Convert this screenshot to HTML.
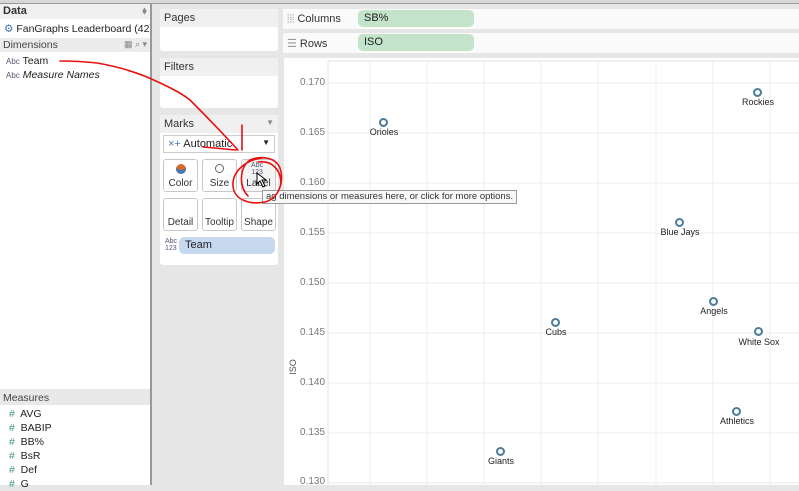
<!DOCTYPE html>
<html><head><style>
*{margin:0;padding:0;box-sizing:border-box}
body{width:799px;height:485px;overflow:hidden;background:#e6e6e6;font-family:"Liberation Sans",sans-serif;font-size:11px;color:#222;position:relative}
.a{position:absolute}
.card{position:absolute;background:#fff;border-radius:3px}
.hd{background:#f0f0f0;padding:3px 4px;color:#333}
.btn{position:absolute;width:35px;height:33px;background:#fff;border:1px solid #c8c8c8;border-radius:3px;font-size:10px;text-align:center;padding-top:18px;color:#333}
.pill{position:absolute;background:#c3e3cb;border-radius:5px;height:17px;padding:2px 6px;font-size:11px}
.pt{position:absolute;width:9px;height:9px;border:2px solid #4a7c9a;border-radius:50%}
.lb{position:absolute;font-size:9px;color:#222;transform:translateX(-50%);white-space:nowrap}
.yt{position:absolute;left:300px;font-size:10px;color:#777}
</style></head><body>
<div class="a" style="left:0;top:0;width:799px;height:4px;background:#d8d8d8;border-bottom:1px solid #999"></div>
<div class="a" style="left:0;top:4px;width:152px;height:481px;background:#fff;border-right:2px solid #999"></div>
<div class="a hd" style="left:0;top:4px;width:150px;height:15px;padding:1px 3px;font-weight:bold">Data<span style="float:right;font-weight:normal;color:#888">⬧</span></div>
<div class="a" style="left:4px;top:23px;width:146px;font-size:10.5px;white-space:nowrap;overflow:hidden"><span style="color:#3a6fb0">⚙</span> FanGraphs Leaderboard (42) (...</div>
<div class="a" style="left:0;top:38px;width:150px;height:14px;background:#ececec;padding:1px 3px;color:#444;font-size:10.5px">Dimensions<span style="float:right;color:#888;font-size:9px">▦ ⌕ ▾</span></div>
<div class="a" style="left:6px;top:55px;font-size:10.5px"><span style="font-size:8px;color:#557">Abc</span> Team</div>
<div class="a" style="left:6px;top:69px;font-style:italic;font-size:10.5px"><span style="font-size:8px;color:#557;font-style:normal">Abc</span> Measure Names</div>
<div class="a" style="left:0;top:389px;width:150px;height:16px;background:#e8e8e8;padding:3px 3px;color:#444;font-size:10.5px">Measures</div>
<div class="a" style="left:9px;top:407px;line-height:14px;font-size:10.5px"><span style="color:#3a9a6a">#</span>&nbsp; AVG<br><span style="color:#3a9a6a">#</span>&nbsp; BABIP<br><span style="color:#3a9a6a">#</span>&nbsp; BB%<br><span style="color:#3a9a6a">#</span>&nbsp; BsR<br><span style="color:#3a9a6a">#</span>&nbsp; Def<br><span style="color:#3a9a6a">#</span>&nbsp; G</div>
<div class="card" style="left:160px;top:9px;width:118px;height:42px"><div class="hd">Pages</div></div>
<div class="card" style="left:160px;top:58px;width:118px;height:50px"><div class="hd">Filters</div></div>
<div class="card" style="left:160px;top:115px;width:118px;height:150px"><div class="hd">Marks<span style="float:right;color:#888;font-size:8px">▼</span></div></div>
<div class="a" style="left:163px;top:135px;width:112px;height:18px;border:1px solid #ccc;background:#fff;padding:2px 4px;font-size:11px"><span style="color:#57a">×+</span> Automatic<span style="float:right;font-size:8px">▼</span></div>
<div class="btn" style="left:163px;top:159px">Color<div class="a" style="left:12px;top:4px;width:10px;height:10px;border-radius:50%;background:#d96a2a;box-shadow:inset 0 -4px #4a7ab0"></div></div>
<div class="btn" style="left:202px;top:159px">Size<div class="a" style="left:12px;top:4px;width:9px;height:9px;border-radius:50%;border:1px solid #666"></div></div>
<div class="btn" style="left:241px;top:159px;background:#f4f4f4">Label<div class="a" style="left:9px;top:2px;font-size:7px;color:#557;line-height:7px">Abc<br>123</div></div>
<div class="btn" style="left:163px;top:198px">Detail</div>
<div class="btn" style="left:202px;top:198px">Tooltip</div>
<div class="btn" style="left:241px;top:198px">Shape</div>
<div class="a" style="left:165px;top:238px;font-size:7px;color:#557;line-height:7px">Abc<br>123</div>
<div class="a" style="left:179px;top:237px;width:96px;height:17px;background:#c6d9ef;border-radius:5px;padding:2px 6px">Team</div>
<div class="a" style="left:283px;top:9px;width:516px;height:20px;background:#fafafa"></div>
<div class="a" style="left:287px;top:13px;color:#333"><span style="color:#999">⦙⦙⦙</span> Columns</div>
<div class="pill" style="left:358px;top:10px;width:116px">SB%</div>
<div class="a" style="left:283px;top:33px;width:516px;height:20px;background:#fafafa"></div>
<div class="a" style="left:287px;top:37px;color:#333"><span style="color:#999">☰</span> Rows</div>
<div class="pill" style="left:358px;top:34px;width:116px">ISO</div>
<div class="a" style="left:284px;top:58px;width:515px;height:427px;background:#fff"></div>
<svg class="a" style="left:0;top:0" width="799" height="485">
<g stroke="#eeeeee" stroke-width="1">
<line x1="328" y1="61" x2="328" y2="485" stroke="#e3e3e3"/>
<line x1="328" y1="61" x2="799" y2="61" stroke="#e3e3e3"/>
<line x1="370" y1="61" x2="370" y2="485"/><line x1="427" y1="61" x2="427" y2="485"/><line x1="484" y1="61" x2="484" y2="485"/><line x1="541" y1="61" x2="541" y2="485"/><line x1="598" y1="61" x2="598" y2="485"/><line x1="656" y1="61" x2="656" y2="485"/><line x1="713" y1="61" x2="713" y2="485"/><line x1="770" y1="61" x2="770" y2="485"/>
<line x1="328" y1="83" x2="799" y2="83"/><line x1="328" y1="133" x2="799" y2="133"/><line x1="328" y1="183" x2="799" y2="183"/><line x1="328" y1="233" x2="799" y2="233"/><line x1="328" y1="283" x2="799" y2="283"/><line x1="328" y1="333" x2="799" y2="333"/><line x1="328" y1="383" x2="799" y2="383"/><line x1="328" y1="433" x2="799" y2="433"/><line x1="328" y1="483" x2="799" y2="483"/>
</g></svg>
<div class="yt" style="top:77px">0.170</div><div class="yt" style="top:127px">0.165</div><div class="yt" style="top:177px">0.160</div><div class="yt" style="top:227px">0.155</div><div class="yt" style="top:277px">0.150</div><div class="yt" style="top:327px">0.145</div><div class="yt" style="top:377px">0.140</div><div class="yt" style="top:427px">0.135</div><div class="yt" style="top:476px">0.130</div>
<div class="a" style="left:285px;top:362px;font-size:9px;color:#555;transform:rotate(-90deg)">ISO</div>
<div class="pt" style="left:379px;top:118px"></div><div class="lb" style="left:384px;top:127px">Orioles</div>
<div class="pt" style="left:753px;top:88px"></div><div class="lb" style="left:758px;top:97px">Rockies</div>
<div class="pt" style="left:675px;top:218px"></div><div class="lb" style="left:680px;top:227px">Blue Jays</div>
<div class="pt" style="left:709px;top:297px"></div><div class="lb" style="left:714px;top:306px">Angels</div>
<div class="pt" style="left:551px;top:318px"></div><div class="lb" style="left:556px;top:327px">Cubs</div>
<div class="pt" style="left:754px;top:327px"></div><div class="lb" style="left:759px;top:337px">White Sox</div>
<div class="pt" style="left:732px;top:407px"></div><div class="lb" style="left:737px;top:416px">Athletics</div>
<div class="pt" style="left:496px;top:447px"></div><div class="lb" style="left:501px;top:456px">Giants</div>
<div class="a" style="left:262px;top:190px;height:14px;background:#f8f8f8;border:1px solid #999;padding:0 3px;font-size:9.5px;line-height:12px;color:#333;white-space:nowrap">ag dimensions or measures here, or click for more options.</div>
<svg class="a" style="left:0;top:0" width="799" height="485" fill="none" stroke="#e81010" stroke-width="1.6" stroke-linecap="round">
<path d="M60 61 C75 61 88 62 97 63 C115 66 132 71 147 77 C165 85 180 92 190 100 C200 110 215 125 238 150"/>
<path d="M242 125 L242 150"/>
<path d="M203 147 C215 148 226 149 236 150"/>
<path d="M262 158 C245 160 232 172 233 186 C234 200 250 205 265 202 C280 198 284 180 280 168 C276 158 262 155 250 160 C240 167 238 185 248 196"/>
<path d="M258 162 C272 160 281 170 281 184"/>
</svg>
<svg class="a" style="left:256px;top:172px" width="12" height="16"><path d="M1 1 L1 12 L4 9 L7 15 L9 14 L6 8 L10 8 Z" fill="#fff" stroke="#000" stroke-width="1"/></svg>
</body></html>
